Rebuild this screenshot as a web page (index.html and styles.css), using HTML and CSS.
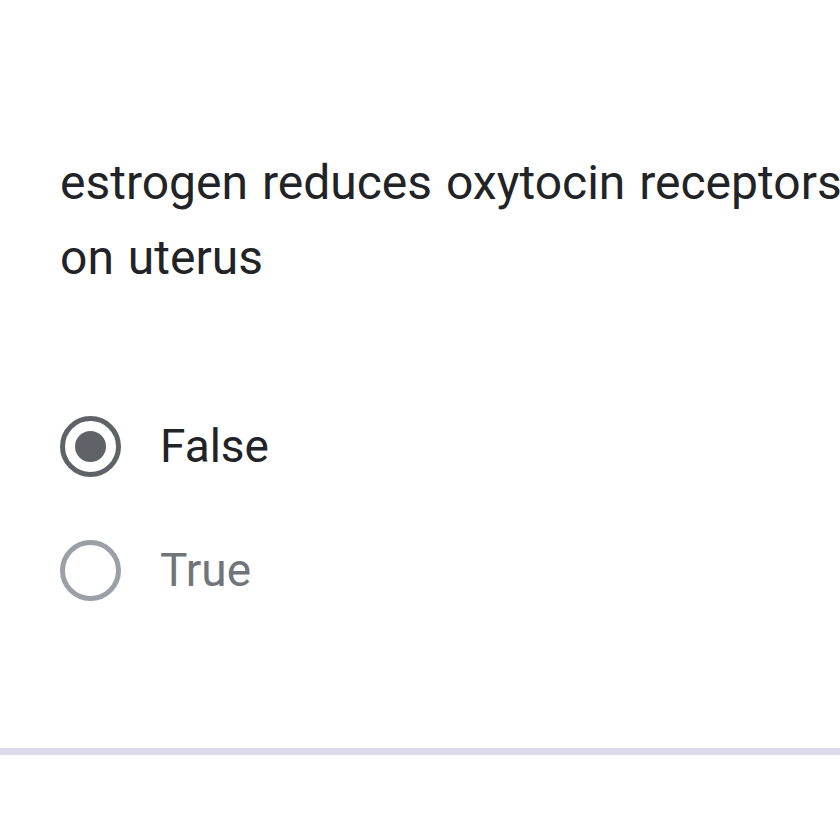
FILE: index.html
```html
<!DOCTYPE html>
<html>
<head>
<meta charset="utf-8">
<link rel="stylesheet" href="styles.css">
</head>
<body>
<div class="page">
  <div class="card">
    <div class="question">estrogen reduces oxytocin receptors on uterus</div>
    <div class="options">
      <label class="option checked">
        <span class="radio"><span class="dot"></span></span>
        <span class="label">False</span>
      </label>
      <label class="option">
        <span class="radio"></span>
        <span class="label">True</span>
      </label>
    </div>
  </div>
  <div class="divider"></div>
</div>
</body>
</html>
```
FILE: styles.css
```css
html, body {
  margin: 0;
  padding: 0;
  background: #fff;
  overflow: hidden;
}
.page {
  width: 840px;
  height: 840px;
  overflow: hidden;
  font-family: Roboto, "Liberation Sans", sans-serif;
}
.card {
  padding: 145px 0 0 60px;
  height: 602px;
  box-sizing: border-box;
}
.question {
  width: 830px;
  font-size: 48px;
  line-height: 75px;
  color: #222326;
  word-spacing: 2px;
}
.options {
  margin-top: 121px;
  display: flex;
  flex-direction: column;
  gap: 64px;
}
.option {
  display: flex;
  align-items: center;
  gap: 39px;
  height: 60px;
}
.radio {
  width: 61px;
  height: 61px;
  box-sizing: border-box;
  border: 5px solid #9aa0a6;
  border-radius: 50%;
  display: flex;
  align-items: center;
  justify-content: center;
  flex: none;
}
.checked .radio {
  border-color: #5f6368;
}
.dot {
  width: 31px;
  height: 31px;
  border-radius: 50%;
  background: #5f6368;
}
.label {
  font-size: 46px;
  color: #70757a;
}
.checked .label {
  color: #222326;
}
.divider {
  height: 7px;
  background: #dcdaeb;
  margin-top: 146px;
}
```
